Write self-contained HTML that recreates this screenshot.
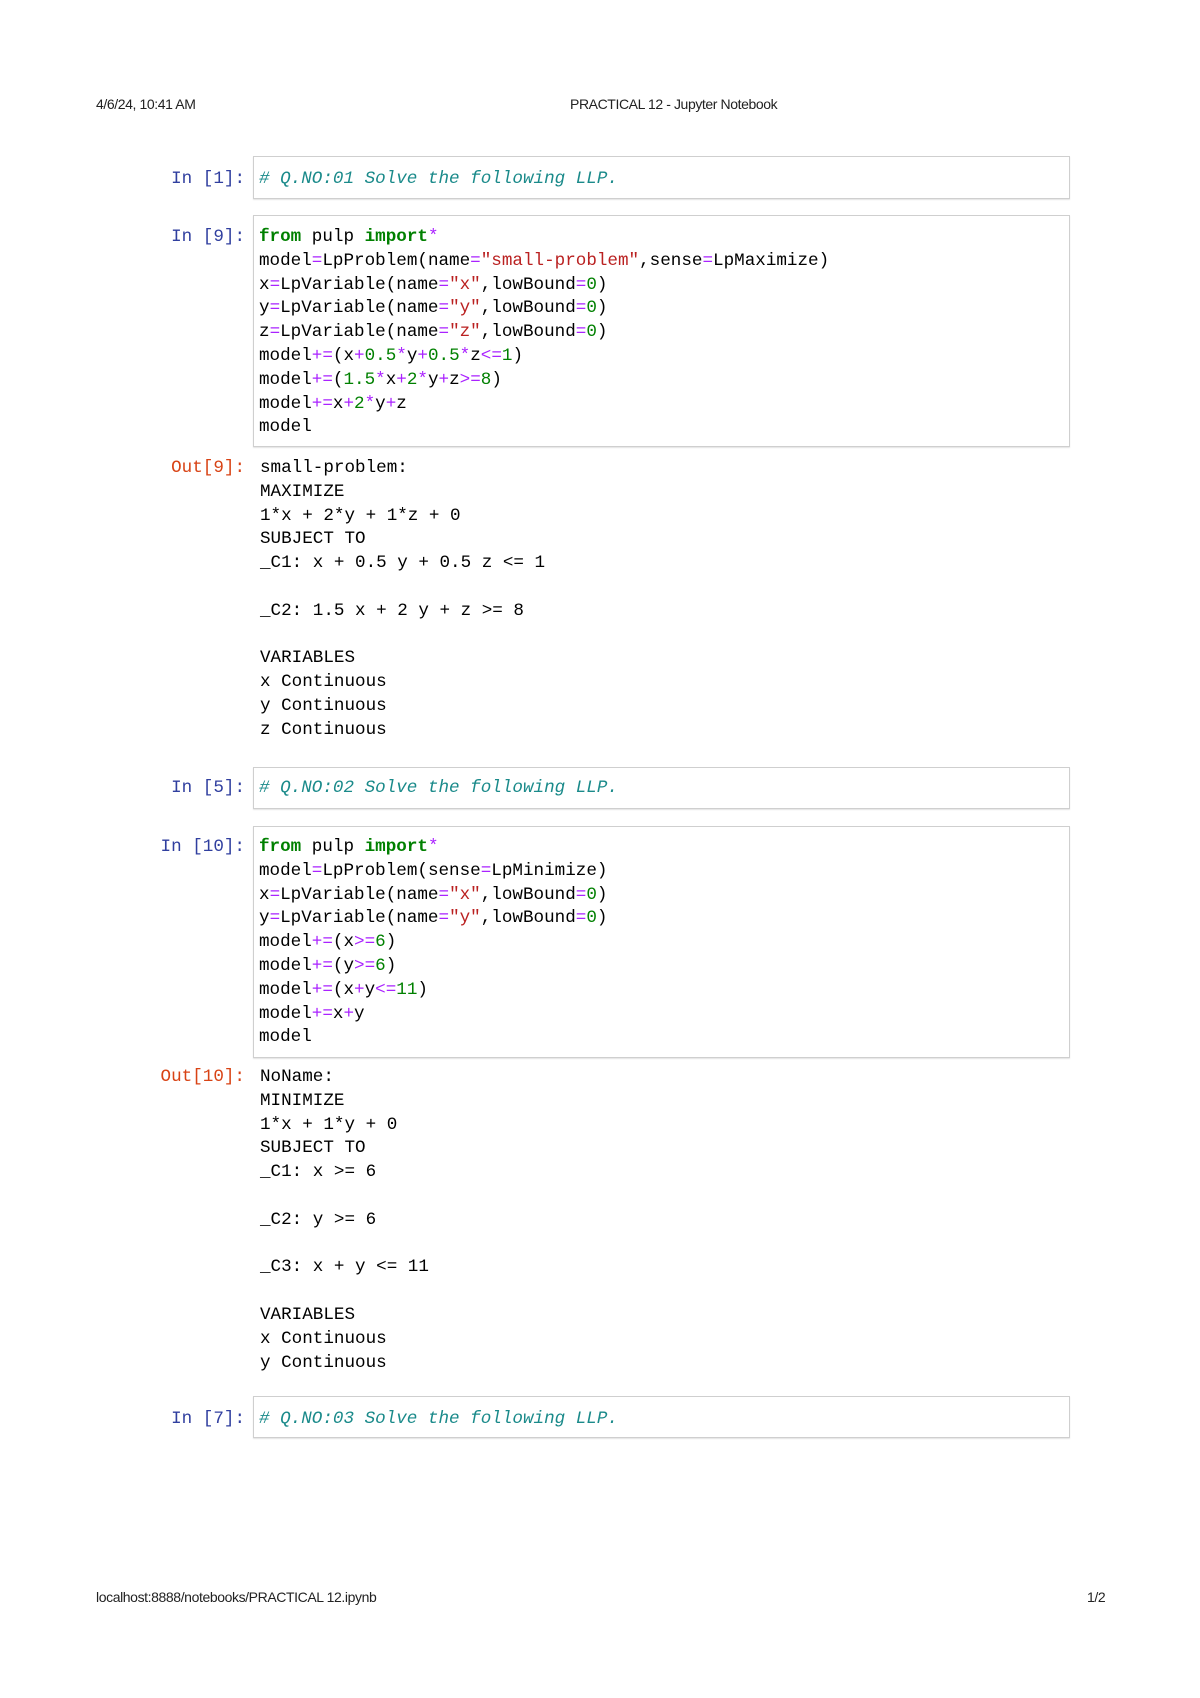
<!DOCTYPE html>
<html><head><meta charset="utf-8"><style>
body{margin:0;background:#fff;width:1200px;height:1698px;position:relative;overflow:hidden}
.hd{position:absolute;font-family:"Liberation Sans",sans-serif;font-size:14px;color:#222;letter-spacing:-0.4px}
.box{position:absolute;left:253px;width:815px;border:1px solid #cfcfcf;background:#fff;box-shadow:0 1px 1px #e4e4e4}
pre{margin:0;font-family:"Liberation Mono",monospace;font-size:17.6px;line-height:23.8px;color:#000;position:absolute;white-space:pre}
.lab{position:absolute;font-family:"Liberation Mono",monospace;font-size:17.6px;line-height:23.8px;text-align:right;width:245px;left:0}
.in{color:#303f9f}.out{color:#d84315}
.k{color:#008000;font-weight:bold}.o{color:#aa22ff}.s{color:#ba2121}.n{color:#008000}.c{color:#1a8a8a;font-style:italic}
</style></head><body>
<div class="hd" style="left:96px;top:96px">4/6/24, 10:41 AM</div>
<div class="hd" style="left:570px;top:96px">PRACTICAL 12 - Jupyter Notebook</div>

<div class="box" style="top:156px;height:41px"></div>
<div class="lab in" style="top:168px">In [1]:</div>
<pre style="left:259px;top:168px"><span class="c"># Q.NO:01 Solve the following LLP.</span></pre>

<div class="box" style="top:215px;height:230px"></div>
<div class="lab in" style="top:226px">In [9]:</div>
<pre style="left:259px;top:226px"><span class="k">from</span> pulp <span class="k">import</span><span class="o">*</span>
model<span class="o">=</span>LpProblem(name<span class="o">=</span><span class="s">"small-problem"</span>,sense<span class="o">=</span>LpMaximize)
x<span class="o">=</span>LpVariable(name<span class="o">=</span><span class="s">"x"</span>,lowBound<span class="o">=</span><span class="n">0</span>)
y<span class="o">=</span>LpVariable(name<span class="o">=</span><span class="s">"y"</span>,lowBound<span class="o">=</span><span class="n">0</span>)
z<span class="o">=</span>LpVariable(name<span class="o">=</span><span class="s">"z"</span>,lowBound<span class="o">=</span><span class="n">0</span>)
model<span class="o">+=</span>(x<span class="o">+</span><span class="n">0.5</span><span class="o">*</span>y<span class="o">+</span><span class="n">0.5</span><span class="o">*</span>z<span class="o">&lt;=</span><span class="n">1</span>)
model<span class="o">+=</span>(<span class="n">1.5</span><span class="o">*</span>x<span class="o">+</span><span class="n">2</span><span class="o">*</span>y<span class="o">+</span>z<span class="o">&gt;=</span><span class="n">8</span>)
model<span class="o">+=</span>x<span class="o">+</span><span class="n">2</span><span class="o">*</span>y<span class="o">+</span>z
model</pre>

<div class="lab out" style="top:457px">Out[9]:</div>
<pre style="left:260px;top:457px">small-problem:
MAXIMIZE
1*x + 2*y + 1*z + 0
SUBJECT TO
_C1: x + 0.5 y + 0.5 z &lt;= 1

_C2: 1.5 x + 2 y + z &gt;= 8

VARIABLES
x Continuous
y Continuous
z Continuous</pre>

<div class="box" style="top:767px;height:40px"></div>
<div class="lab in" style="top:777px">In [5]:</div>
<pre style="left:259px;top:777px"><span class="c"># Q.NO:02 Solve the following LLP.</span></pre>

<div class="box" style="top:826px;height:230px"></div>
<div class="lab in" style="top:836px">In [10]:</div>
<pre style="left:259px;top:836px"><span class="k">from</span> pulp <span class="k">import</span><span class="o">*</span>
model<span class="o">=</span>LpProblem(sense<span class="o">=</span>LpMinimize)
x<span class="o">=</span>LpVariable(name<span class="o">=</span><span class="s">"x"</span>,lowBound<span class="o">=</span><span class="n">0</span>)
y<span class="o">=</span>LpVariable(name<span class="o">=</span><span class="s">"y"</span>,lowBound<span class="o">=</span><span class="n">0</span>)
model<span class="o">+=</span>(x<span class="o">&gt;=</span><span class="n">6</span>)
model<span class="o">+=</span>(y<span class="o">&gt;=</span><span class="n">6</span>)
model<span class="o">+=</span>(x<span class="o">+</span>y<span class="o">&lt;=</span><span class="n">11</span>)
model<span class="o">+=</span>x<span class="o">+</span>y
model</pre>

<div class="lab out" style="top:1066px">Out[10]:</div>
<pre style="left:260px;top:1066px">NoName:
MINIMIZE
1*x + 1*y + 0
SUBJECT TO
_C1: x &gt;= 6

_C2: y &gt;= 6

_C3: x + y &lt;= 11

VARIABLES
x Continuous
y Continuous</pre>

<div class="box" style="top:1396px;height:40px"></div>
<div class="lab in" style="top:1408px">In [7]:</div>
<pre style="left:259px;top:1408px"><span class="c"># Q.NO:03 Solve the following LLP.</span></pre>

<div class="hd" style="left:96px;top:1589px">localhost:8888/notebooks/PRACTICAL 12.ipynb</div>
<div class="hd" style="left:1087px;top:1589px">1/2</div>
</body></html>
